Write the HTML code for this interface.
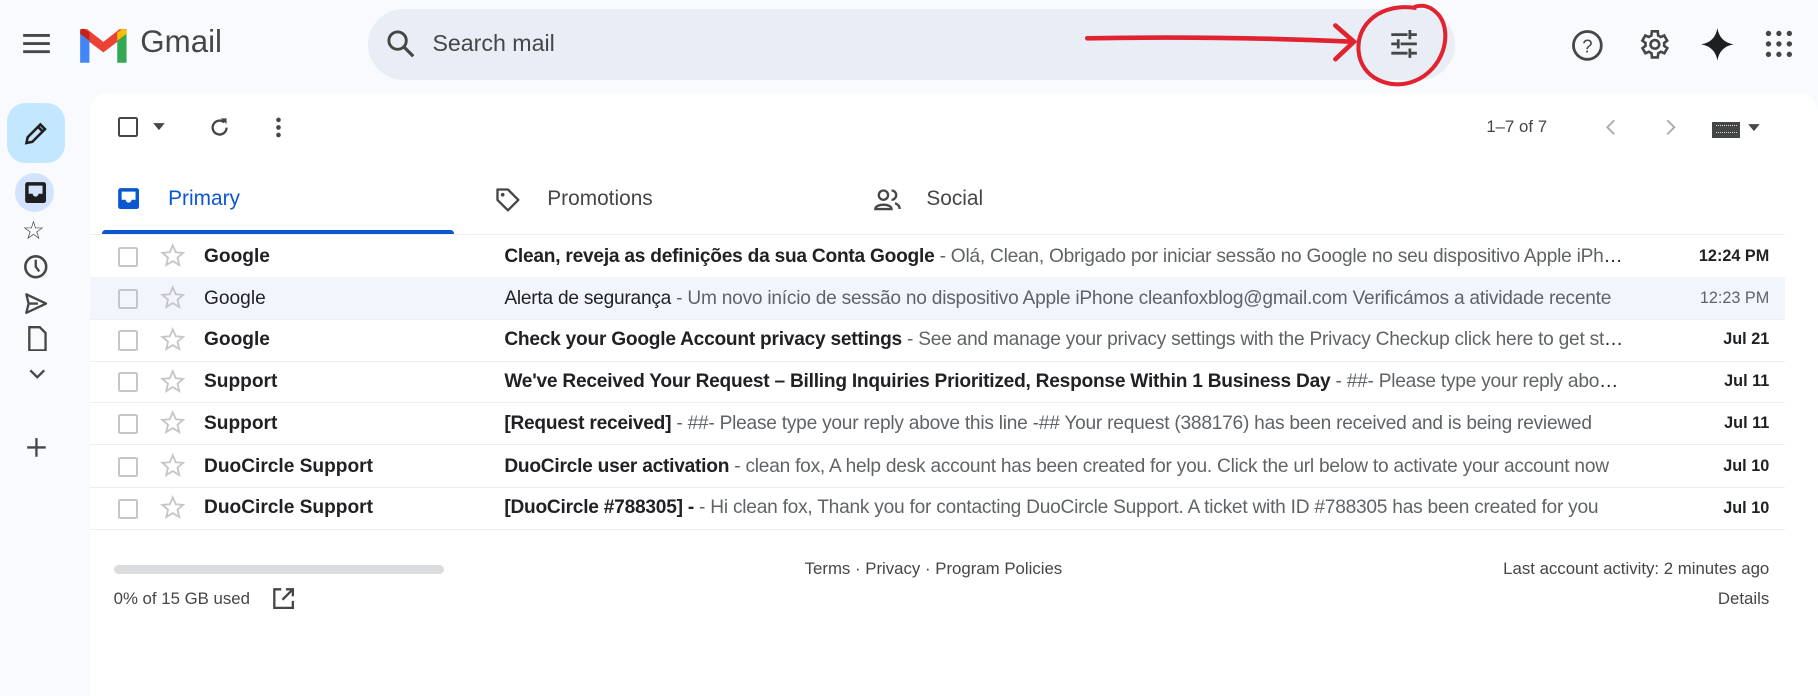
<!DOCTYPE html>
<html><head><meta charset="utf-8"><style>
html,body{margin:0;padding:0;}
body{width:1818px;height:667px;overflow:hidden;background:#f8fafd;font-family:"Liberation Sans",sans-serif;}
#w{zoom:1.1594;width:1568px;height:576px;position:relative;background:#f8fafd;}
.a{position:absolute;}
svg{display:block}
.panel{left:78px;top:80px;width:1490px;height:520px;background:#fff;border-radius:16px 16px 0 0;}
.row{position:absolute;left:78px;width:1462px;height:36px;border-bottom:1px solid #eceff1;font-size:16.5px;color:#202124;}
.row .cb{position:absolute;left:24px;top:10px;width:14px;height:14px;border:2px solid #c4c7c5;border-radius:2px;}
.row .st{position:absolute;left:60px;top:7px;}
.row .fr{position:absolute;left:98px;top:9px;font-weight:bold;}
.row .sb{position:absolute;left:357px;top:9px;width:968px;white-space:nowrap;overflow:hidden;text-overflow:ellipsis;letter-spacing:-0.2px}
.row .sb b{color:#202124}
.row .sb span{color:#5f6368}
.row .dt{position:absolute;right:14px;top:10px;font-size:14px;font-weight:bold;}
.row.r .fr,.row.r .dt{font-weight:normal}
.row.r .dt{color:#5f6368}
.row.r{background:#f2f6fc}
</style></head><body><div id="w">
<svg class="a" style="left:19px;top:28px" width="26" height="20"><path d="M1 3h23M1 10h23M1 17h23" stroke="#444746" stroke-width="2.5"/></svg>
<svg class="a" style="left:68px;top:24px" width="42" height="30" viewBox="0 0 42 30"><path d="M1 6 L21 21 L41 6 L41 1 L35 1 L21 12 L7 1 L1 1z" fill="#ea4335"/><path d="M1 4v26h8V11L1 5z" fill="#4285f4"/><path d="M33 30h8V5l-8 6z" fill="#34a853"/><path d="M33 11l8-6V3c0-2-2-3-4-2l-4 3z" fill="#fbbc04"/><path d="M1 5V3c0-2 2-3 4-2l4 3v7z" fill="#c5221f"/></svg>
<div class="a" style="left:121px;top:21px;font-size:27px;color:#444746">Gmail</div>
<div class="a" style="left:317px;top:8px;width:938px;height:61px;border-radius:31px;background:#e9eef6"></div>
<svg class="a" style="left:333px;top:25px" width="26" height="26"><circle cx="10" cy="10" r="7.5" stroke="#444746" stroke-width="2.5" fill="none"/><path d="M15.5 15.5l8 8" stroke="#444746" stroke-width="2.8"/></svg>
<div class="a" style="left:373px;top:26px;font-size:20px;color:#444746">Search mail</div>
<svg class="a" style="left:1198px;top:26px" width="26" height="24"><path d="M2 4h14M19 4h5M18 0v8M2 12h5M10 12h14M8 8v8M2 20h14M19 20h5M18 16v8" stroke="#444746" stroke-width="2.4"/></svg>
<svg class="a" style="left:930px;top:0px" width="340" height="80"><path d="M8 33 Q130 31 236 36" stroke="#e0232e" stroke-width="4" fill="none" stroke-linecap="round"/><path d="M222 22 L238 36 L222 51" stroke="#e0232e" stroke-width="4" fill="none" stroke-linecap="round"/><path d="M292 7 C262 2 240 20 242 44 C244 68 270 78 290 70 C315 60 323 30 312 14 C304 4 296 4 290 6" stroke="#e0232e" stroke-width="3.5" fill="none"/></svg>
<svg class="a" style="left:1354px;top:24px" width="30" height="30"><circle cx="15" cy="15" r="12" stroke="#444746" stroke-width="2.4" fill="none"/><text x="15" y="21" font-size="16" text-anchor="middle" fill="#444746" font-family="Liberation Sans">?</text></svg>
<svg class="a" style="left:1411px;top:23px" width="30" height="30" viewBox="0 0 24 24"><path d="M19.4 13a7.5 7.5 0 000-2l2.1-1.6-2-3.5-2.5 1a7 7 0 00-1.7-1L15 3h-4l-.4 2.9a7 7 0 00-1.7 1l-2.5-1-2 3.5L6.6 11a7.5 7.5 0 000 2l-2.1 1.6 2 3.5 2.5-1a7 7 0 001.7 1L11 21h4l.4-2.9a7 7 0 001.7-1l2.5 1 2-3.5z" fill="none" stroke="#444746" stroke-width="1.8"/><circle cx="13" cy="12" r="3" fill="none" stroke="#444746" stroke-width="1.8"/></svg>
<svg class="a" style="left:1466px;top:23px" width="30" height="30"><path d="M15 1 Q17 13 29 15 Q17 17 15 29 Q13 17 1 15 Q13 13 15 1z" fill="#1f1f1f"/></svg>
<svg class="a" style="left:1522px;top:26px" width="24" height="24"><g fill="#444746"><circle cx="3" cy="3" r="2.3"/><circle cx="12" cy="3" r="2.3"/><circle cx="21" cy="3" r="2.3"/><circle cx="3" cy="12" r="2.3"/><circle cx="12" cy="12" r="2.3"/><circle cx="21" cy="12" r="2.3"/><circle cx="3" cy="21" r="2.3"/><circle cx="12" cy="21" r="2.3"/><circle cx="21" cy="21" r="2.3"/></g></svg>
<div class="a" style="left:6px;top:89px;width:50px;height:52px;border-radius:16px;background:#c2e7ff"></div>
<svg class="a" style="left:20px;top:104px" width="22" height="22"><path d="M3 19l1-5L15 3l4 4L8 18z M13 5l4 4" stroke="#1f1f1f" stroke-width="2.2" fill="none"/></svg>
<div class="a" style="left:13px;top:149px;width:34px;height:34px;border-radius:17px;background:#d3e3fd"></div>
<svg class="a" style="left:21px;top:156px" width="20" height="20"><rect x="1" y="1" width="18" height="18" rx="2" fill="#1f1f1f"/><path d="M4 4h12v7h-3.5a2.5 2.5 0 01-5 0H4z" fill="#d3e3fd"/></svg>
<div class="a" style="left:19px;top:186px;font-size:22px;color:#444746">☆</div>
<svg class="a" style="left:20px;top:219px" width="22" height="22"><circle cx="11" cy="11" r="9" stroke="#444746" stroke-width="2.2" fill="none"/><path d="M11 5v6l3 4" stroke="#444746" stroke-width="2" fill="none"/></svg>
<svg class="a" style="left:21px;top:252px" width="22" height="20"><path d="M2 2l17 8L2 18l2-8z M4 10h8" stroke="#444746" stroke-width="2" fill="none" stroke-linejoin="round"/></svg>
<svg class="a" style="left:23px;top:281px" width="18" height="22"><path d="M2 1h9l5 5v15H2z" stroke="#444746" stroke-width="2" fill="none"/></svg>
<svg class="a" style="left:24px;top:317px" width="16" height="12"><path d="M2 2l6 6 6-6" stroke="#444746" stroke-width="2" fill="none"/></svg>
<svg class="a" style="left:22px;top:377px" width="18" height="18"><path d="M9 1v16M1 9h16" stroke="#444746" stroke-width="2"/></svg>
<div class="a panel"></div>
<div class="a" style="left:102px;top:101px;width:14px;height:14px;border:2px solid #444746;border-radius:2px"></div>
<svg class="a" style="left:131px;top:105px" width="12" height="8"><path d="M1 1h10L6 7z" fill="#444746"/></svg>
<svg class="a" style="left:179px;top:100px" width="20" height="20"><path d="M16 10a6 6 0 11-2-4.5" stroke="#444746" stroke-width="2" fill="none"/><path d="M11 2h5v5z" fill="#444746"/></svg>
<svg class="a" style="left:237px;top:101px" width="6" height="18"><g fill="#444746"><circle cx="3" cy="2.5" r="2"/><circle cx="3" cy="9" r="2"/><circle cx="3" cy="15.5" r="2"/></g></svg>
<div class="a" style="left:1282px;top:101px;font-size:14.5px;color:#444746">1–7 of 7</div>
<svg class="a" style="left:1384px;top:102px" width="10" height="16"><path d="M8 2L2 8l6 6" stroke="#aaa" stroke-width="1.6" fill="none"/></svg>
<svg class="a" style="left:1436px;top:102px" width="10" height="16"><path d="M2 2l6 6-6 6" stroke="#aaa" stroke-width="1.6" fill="none"/></svg>
<div class="a" style="left:1477px;top:105px;width:24px;height:14px;background:#444746"></div>
<div class="a" style="left:1480px;top:108px;width:18px;height:5px;border-top:1px dotted #ddd;border-bottom:1px dotted #ddd"></div>
<svg class="a" style="left:1507px;top:106px" width="12" height="8"><path d="M1 1h10L6 7z" fill="#444746"/></svg>
<svg class="a" style="left:101px;top:161px" width="20" height="20"><rect x="1" y="1" width="18" height="18" rx="2" fill="#0b57d0"/><path d="M4 4h12v7h-3.5a2.5 2.5 0 01-5 0H4z" fill="#fff"/></svg>
<div class="a" style="left:145px;top:161px;font-size:18px;color:#0b57d0">Primary</div>
<div class="a" style="left:88px;top:198px;width:304px;height:4px;background:#0b57d0;border-radius:3px 3px 0 0"></div>
<svg class="a" style="left:426px;top:160px" width="24" height="24"><path d="M3 3h9l9 9-9 9-9-9z" stroke="#444746" stroke-width="2" fill="none" stroke-linejoin="round"/><circle cx="7.5" cy="7.5" r="1.6" fill="#444746"/></svg>
<div class="a" style="left:472px;top:161px;font-size:18px;color:#444746">Promotions</div>
<svg class="a" style="left:753px;top:161px" width="26" height="22"><circle cx="9" cy="7" r="4" stroke="#444746" stroke-width="2" fill="none"/><path d="M2 19c0-5 14-5 14 0z" stroke="#444746" stroke-width="2" fill="none"/><path d="M16 3a4 4 0 010 8M19 14c3 1 4 3 4 5" stroke="#444746" stroke-width="2" fill="none"/></svg>
<div class="a" style="left:799px;top:161px;font-size:18px;color:#444746">Social</div>
<div class="a" style="left:78px;top:202px;width:1462px;height:1px;background:#eceff1"></div>
<div class="row" style="top:203px"><div class="cb"></div><div class="st"><svg width="22" height="22"><path d="M11 2l2.6 6 6.4.5-4.9 4.2 1.5 6.3L11 15.6 5.4 19l1.5-6.3L2 8.5 8.4 8z" stroke="#c4c7c5" stroke-width="1.6" fill="none"/></svg></div><div class="fr">Google</div><div class="sb"><b>Clean, reveja as definições da sua Conta Google</b><span> - Olá, Clean, Obrigado por iniciar sessão no Google no seu dispositivo Apple iPhone</span></div><div class="dt">12:24 PM</div></div>
<div class="row r" style="top:239px"><div class="cb"></div><div class="st"><svg width="22" height="22"><path d="M11 2l2.6 6 6.4.5-4.9 4.2 1.5 6.3L11 15.6 5.4 19l1.5-6.3L2 8.5 8.4 8z" stroke="#c4c7c5" stroke-width="1.6" fill="none"/></svg></div><div class="fr">Google</div><div class="sb" style="color:#202124">Alerta de segurança<span> - Um novo início de sessão no dispositivo Apple iPhone cleanfoxblog@gmail.com Verificámos a atividade recente</span></div><div class="dt">12:23 PM</div></div>
<div class="row" style="top:275px"><div class="cb"></div><div class="st"><svg width="22" height="22"><path d="M11 2l2.6 6 6.4.5-4.9 4.2 1.5 6.3L11 15.6 5.4 19l1.5-6.3L2 8.5 8.4 8z" stroke="#c4c7c5" stroke-width="1.6" fill="none"/></svg></div><div class="fr">Google</div><div class="sb"><b>Check your Google Account privacy settings</b><span> - See and manage your privacy settings with the Privacy Checkup click here to get started today</span></div><div class="dt">Jul 21</div></div>
<div class="row" style="top:311px"><div class="cb"></div><div class="st"><svg width="22" height="22"><path d="M11 2l2.6 6 6.4.5-4.9 4.2 1.5 6.3L11 15.6 5.4 19l1.5-6.3L2 8.5 8.4 8z" stroke="#c4c7c5" stroke-width="1.6" fill="none"/></svg></div><div class="fr">Support</div><div class="sb"><b>We've Received Your Request – Billing Inquiries Prioritized, Response Within 1 Business Day</b><span> - ##- Please type your reply above this line</span></div><div class="dt">Jul 11</div></div>
<div class="row" style="top:347px"><div class="cb"></div><div class="st"><svg width="22" height="22"><path d="M11 2l2.6 6 6.4.5-4.9 4.2 1.5 6.3L11 15.6 5.4 19l1.5-6.3L2 8.5 8.4 8z" stroke="#c4c7c5" stroke-width="1.6" fill="none"/></svg></div><div class="fr">Support</div><div class="sb"><b>[Request received]</b><span> - ##- Please type your reply above this line -## Your request (388176) has been received and is being reviewed</span></div><div class="dt">Jul 11</div></div>
<div class="row" style="top:384px"><div class="cb"></div><div class="st"><svg width="22" height="22"><path d="M11 2l2.6 6 6.4.5-4.9 4.2 1.5 6.3L11 15.6 5.4 19l1.5-6.3L2 8.5 8.4 8z" stroke="#c4c7c5" stroke-width="1.6" fill="none"/></svg></div><div class="fr">DuoCircle Support</div><div class="sb"><b>DuoCircle user activation</b><span> - clean fox, A help desk account has been created for you. Click the url below to activate your account now</span></div><div class="dt">Jul 10</div></div>
<div class="row" style="top:420px"><div class="cb"></div><div class="st"><svg width="22" height="22"><path d="M11 2l2.6 6 6.4.5-4.9 4.2 1.5 6.3L11 15.6 5.4 19l1.5-6.3L2 8.5 8.4 8z" stroke="#c4c7c5" stroke-width="1.6" fill="none"/></svg></div><div class="fr">DuoCircle Support</div><div class="sb"><b>[DuoCircle #788305] -</b><span> - Hi clean fox, Thank you for contacting DuoCircle Support. A ticket with ID #788305 has been created for you</span></div><div class="dt">Jul 10</div></div>
<div class="a" style="left:98px;top:487px;width:285px;height:8px;border-radius:4px;background:#dadce0"></div>
<div class="a" style="left:98px;top:508px;font-size:14.5px;color:#444746">0% of 15 GB used</div>
<svg class="a" style="left:235px;top:506px" width="20" height="20"><path d="M8 2H2v16h16v-6" stroke="#444746" stroke-width="2" fill="none"/><path d="M12 2h6v6M18 2l-9 9" stroke="#444746" stroke-width="2" fill="none"/></svg>
<div class="a" style="left:694px;top:482px;font-size:14.5px;color:#444746">Terms · Privacy · Program Policies</div>
<div class="a" style="right:42px;top:482px;font-size:14.5px;color:#444746">Last account activity: 2 minutes ago</div>
<div class="a" style="right:42px;top:508px;font-size:14.5px;color:#444746">Details</div>
</div></body></html>
